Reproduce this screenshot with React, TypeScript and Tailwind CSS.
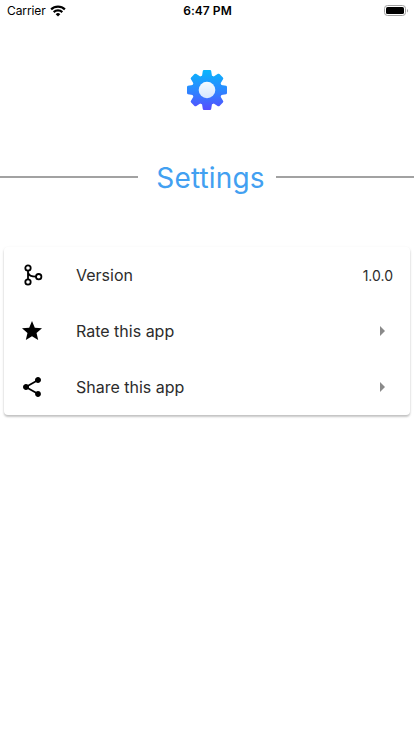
import type { ReactNode } from "react";
import { MdArrowRight, MdShare, MdStar } from "react-icons/md";

interface SettingsItem {
  label: string;
  icon: ReactNode;
  value?: string;
}

const ITEMS: SettingsItem[] = [
  { label: "Version", icon: <BranchIcon />, value: "1.0.0" },
  { label: "Rate this app", icon: <MdStar className="w-6 h-6" /> },
  { label: "Share this app", icon: <MdShare className="w-6 h-6" /> },
];

const STRAIGHT_TEETH = [0, 90, 180, 270];
const DIAGONAL_TEETH = [45, 135, 225, 315];

function BranchIcon() {
  return (
    <svg viewBox="0 0 24 24" className="w-6 h-6" fill="none" stroke="currentColor" strokeWidth="1.8">
      <circle cx="8" cy="5" r="2.7" />
      <circle cx="8" cy="19" r="2.7" />
      <circle cx="18.7" cy="13.7" r="2.7" />
      <path d="M8 7.7v8.6M8 9.5c.7 2.8 3.4 4.2 8 4.2" />
    </svg>
  );
}

function GearIcon() {
  return (
    <svg viewBox="-20 -20 40 40" className="w-10 h-10">
      <defs>
        <linearGradient id="gear" gradientUnits="userSpaceOnUse" x1="0" y1="-20" x2="0" y2="20">
          <stop offset="0" stopColor="#08b6fc" />
          <stop offset="0.5" stopColor="#2b88ff" />
          <stop offset="1" stopColor="#564cff" />
        </linearGradient>
        <linearGradient id="hub" x1="0" y1="0" x2="0" y2="1">
          <stop offset="0" stopColor="#f5fbff" />
          <stop offset="1" stopColor="#d5e6ff" />
        </linearGradient>
        <clipPath id="gear-shape">
          <circle r="15.2" />
          {STRAIGHT_TEETH.map((a) => (
            <path
              key={a}
              transform={`rotate(${a})`}
              d="M-5.2-13L-4.2-19.1Q-4-20-3.1-20H3.1Q4-20 4.2-19.1L5.2-13Z"
            />
          ))}
          {DIAGONAL_TEETH.map((a) => (
            <path
              key={a}
              transform={`rotate(${a})`}
              d="M-5.2-13L-3.7-19.2Q-3.3-20.1-2.4-20.1H2.4Q3.3-20.1 3.7-19.2L5.2-13Z"
            />
          ))}
        </clipPath>
      </defs>
      <rect x="-20" y="-20" width="40" height="40" fill="url(#gear)" clipPath="url(#gear-shape)" />
      <circle r="8.3" fill="url(#hub)" />
    </svg>
  );
}

function StatusBar() {
  return (
    <div className="grid grid-cols-3 items-center h-5 pl-[7px] pr-[6px] pt-[2px] text-[12px] leading-none text-black">
      <div className="flex items-center gap-[4px]">
        <span className="tracking-[-0.1px]">Carrier</span>
        <svg viewBox="0 0 16 12" className="w-4 h-3">
          <path d="M8 11.5L5.7 9.2a3.3 3.3 0 0 1 4.6 0z" />
          <path d="M3.7 7.1a6.2 6.2 0 0 1 8.6 0M1.1 4.4a9.9 9.9 0 0 1 13.8 0" fill="none" stroke="#000" strokeWidth="2.2" />
        </svg>
      </div>
      <span className="text-center font-semibold tracking-[0.05px]">6:47 PM</span>
      <svg viewBox="0 0 25 12" className="w-[25px] h-3 justify-self-end">
        <rect x="1.5" y="0.5" width="21" height="10" rx="3" fill="none" stroke="#a0a0a0" />
        <rect x="3" y="2" width="18" height="7" rx="1.6" />
        <path d="M24 4v3.6c.7-.4 1-1 1-1.8s-.3-1.4-1-1.8z" fill="#a0a0a0" />
      </svg>
    </div>
  );
}

function SettingsRow({ item }: { item: SettingsItem }) {
  return (
    <li className="flex items-center h-14 px-4 text-black">
      {item.icon}
      <span className="ml-8 flex-1 text-[16px] text-[#2c2c2c]">{item.label}</span>
      {item.value
        ? <span className="mr-px text-[14px] text-[#2c2c2c]">{item.value}</span>
        : <MdArrowRight className="w-6 h-6 text-[#8a8a8a]" />}
    </li>
  );
}

export default function App() {
  return (
    <div className="h-[736px] bg-white overflow-hidden font-['Inter',sans-serif]">
      <StatusBar />

      <div className="flex justify-center pt-[50px]">
        <GearIcon />
      </div>

      {/* Title between two rules */}
      <div className="flex items-center justify-between mt-[47px] h-10">
        <div className="w-[138px] h-[2px] bg-[#a2a2a2]" />
        <h1 className="ml-[7px] pt-px text-[28px] tracking-[0.15px] text-[#42a0f1]">Settings</h1>
        <div className="w-[138px] h-[2px] bg-[#a2a2a2]" />
      </div>

      <ul className="mx-1 mt-[50px] rounded-[4px] bg-white shadow-[0_2px_2px_rgba(0,0,0,0.18),0_1px_3px_rgba(0,0,0,0.1)]">
        {ITEMS.map((item) => (
          <SettingsRow key={item.label} item={item} />
        ))}
      </ul>
    </div>
  );
}
